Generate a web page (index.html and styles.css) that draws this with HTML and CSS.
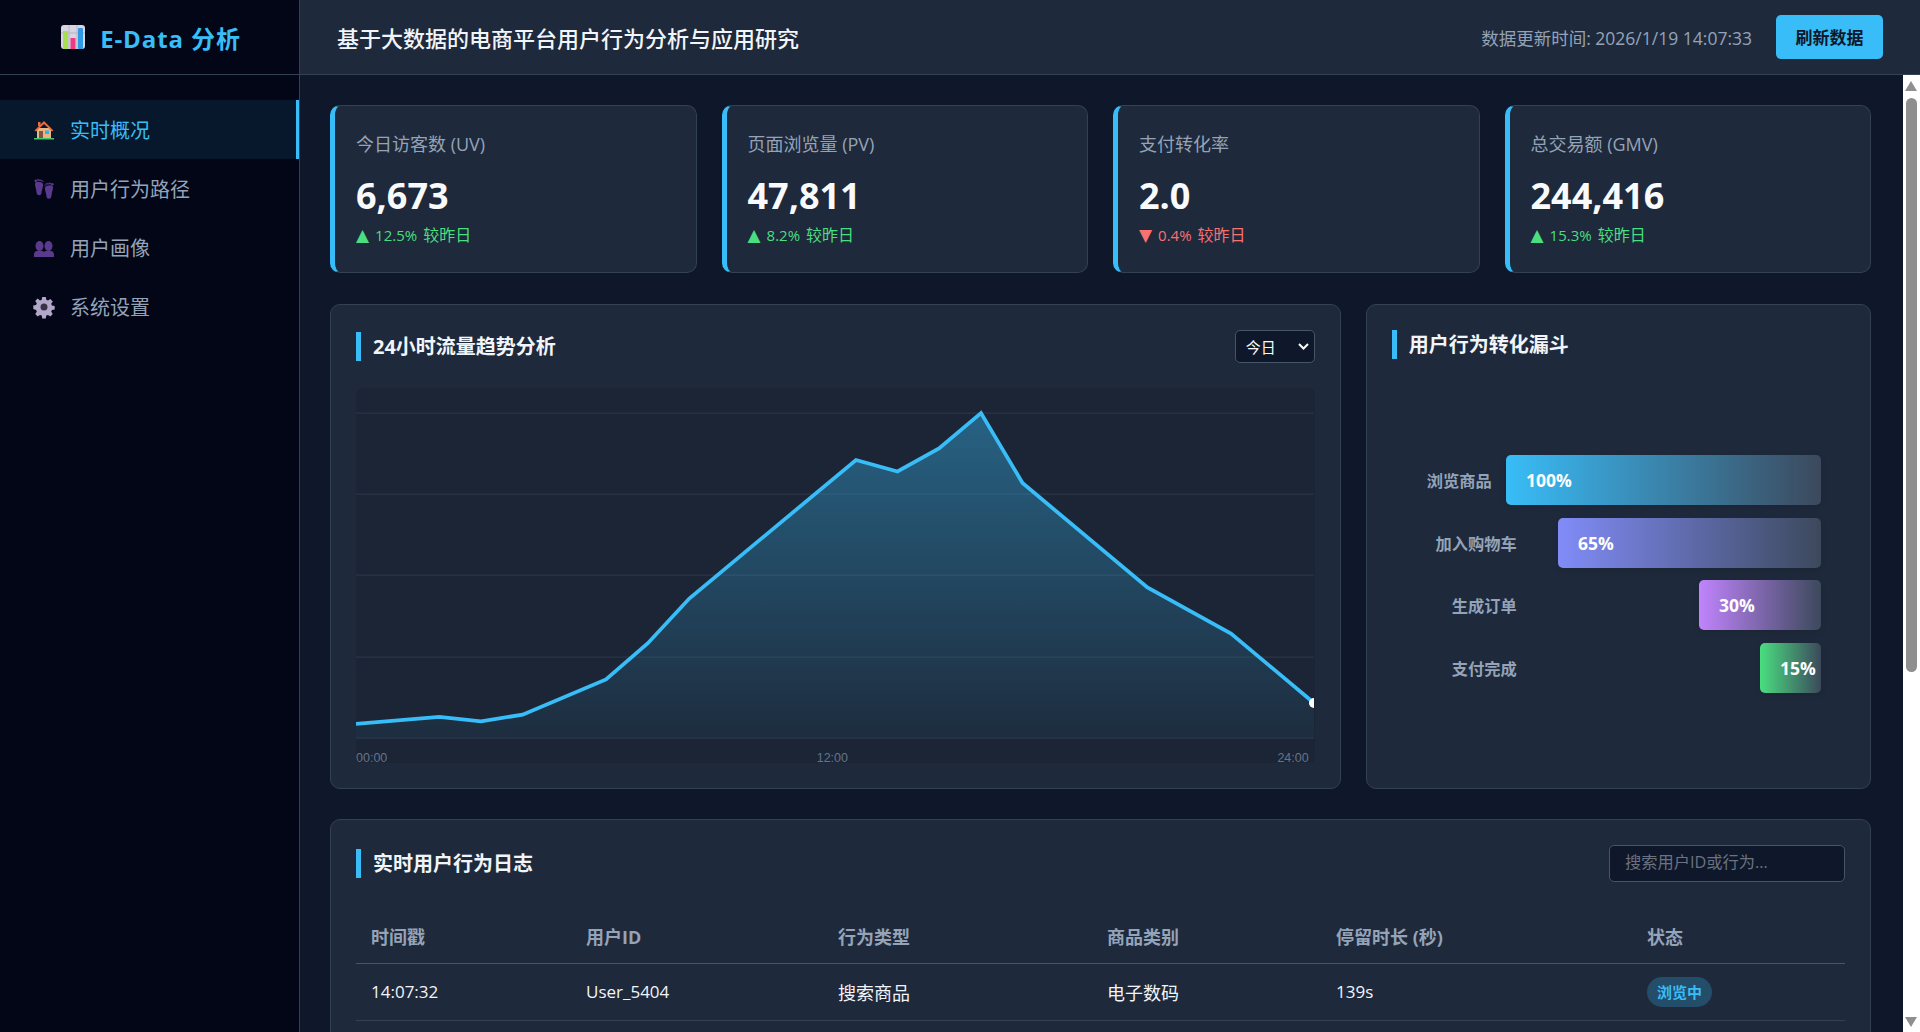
FILE: index.html
```html
<!DOCTYPE html>
<html lang="zh-CN">
<head>
  <meta charset="UTF-8" />
  <meta name="viewport" content="width=device-width, initial-scale=1.0"/>
  <title>E-Data 分析</title>
  <link rel="stylesheet" href="styles.css">
</head>
<body>

  <!-- 侧边栏 -->
  <aside class="sidebar">
    <div class="logo">
      <svg class="logo-icon" viewBox="0 0 24 24">
        <rect x="0" y="0" width="24" height="24" rx="3" fill="#d9d4e2"/>
        <path d="M0 8h24M8 0v24M16 0v24" stroke="#b9b4c6" stroke-width="1"/>
        <rect x="2" y="6" width="5" height="18" fill="#a6e04f"/>
        <rect x="9.500" y="13" width="5" height="11" fill="#ec3d82"/>
        <rect x="17" y="3" width="5" height="21" rx="1" fill="#2f9be8"/>
      </svg>
      <span>E-Data 分析</span>
    </div>
    <nav class="nav">
      <a class="nav-item active">
        <svg class="nav-icon" viewBox="0 0 20 20">
          <rect x="3" y="8" width="14" height="10" fill="#e9b680"/>
          <rect x="5" y="11" width="4" height="7" fill="#7b5546"/>
          <rect x="11" y="10.500" width="4" height="3.500" fill="#35b0ee"/>
          <path d="M0.500 10.500 10 1l9.500 9.500-1.500 1L10 4 2 11.500z" fill="#ee6a3c"/>
          <rect x="4" y="2" width="2.500" height="4" fill="#ee6a3c"/>
          <rect x="0" y="18" width="20" height="1.500" fill="#45c56b"/>
        </svg>
        <span>实时概况</span>
      </a>
      <a class="nav-item">
        <svg class="nav-icon" viewBox="0 0 20 20">
          <g fill="#5b3a8e">
            <g id="foot">
              <path d="M1 5C1 3 3 2.500 5 3c3 0 4.500 1 4 4-.5 3-1.500 5-1.500 7 0 2-2 2.500-3.500 2-1.500-.5-1.500-3-1.800-5C1.800 9 1 7 1 5z"/>
              <circle cx="1.700" cy="1.700" r="1.300"/>
              <circle cx="4" cy="1.100" r="1"/>
              <circle cx="6" cy="1.200" r=".9"/>
              <circle cx="7.800" cy="1.600" r=".8"/>
              <circle cx="9" cy="2.600" r=".7"/>
            </g>
            <use href="#foot" transform="translate(20 3.500) scale(-1 1)"/>
          </g>
        </svg>
        <span>用户行为路径</span>
      </a>
      <a class="nav-item">
        <svg class="nav-icon" viewBox="0 0 20 20">
          <g fill="#5b3a8e">
            <ellipse cx="5.500" cy="8" rx="4" ry="5"/>
            <ellipse cx="14.500" cy="8" rx="4" ry="5"/>
            <path d="M0 19v-2.500C0 14 2 12.500 5.500 12.500c1.800 0 3.500.5 4.500 1.500 1-1 2.700-1.500 4.500-1.500C18 12.500 20 14 20 16.500V19z"/>
          </g>
        </svg>
        <span>用户画像</span>
      </a>
      <a class="nav-item">
        <svg class="nav-icon" viewBox="0 0 20 20">
          <path fill="#b3a7c9" d="M8.200 0h3.600l.5 2.800 1.700.7 2.300-1.600 2.500 2.500-1.600 2.300.7 1.700 2.800.5v3.600l-2.800.5-.7 1.700 1.600 2.300-2.500 2.500-2.300-1.600-1.700.7-.5 2.800H8.200l-.5-2.800-1.700-.7-2.300 1.600-2.500-2.500 1.600-2.300-.7-1.700L-.7 12V8.400l2.800-.5.7-1.700-1.600-2.300 2.500-2.500L6 3.500l1.700-.7z"/>
          <circle cx="10" cy="10" r="3.500" fill="#3a3348"/>
        </svg>
        <span>系统设置</span>
      </a>
    </nav>
  </aside>

  <div class="main">
    <!-- 顶部栏 -->
    <header class="topbar">
      <h1 class="page-title">基于大数据的电商平台用户行为分析与应用研究</h1>
      <div class="topbar-right">
        <span class="update-time">数据更新时间: 2026/1/19 14:07:33</span>
        <button class="refresh-btn">刷新数据</button>
      </div>
    </header>

    <div class="main-body">
      <main class="content">

        <!-- 指标卡片 -->
        <section class="stats">
          <div class="stat-card">
            <div class="stat-label">今日访客数 (UV)</div>
            <div class="stat-value">6,673</div>
            <div class="stat-trend up"><span class="arrow">▲</span><span>12.5%</span><span class="compare">较昨日</span></div>
          </div>
          <div class="stat-card">
            <div class="stat-label">页面浏览量 (PV)</div>
            <div class="stat-value">47,811</div>
            <div class="stat-trend up"><span class="arrow">▲</span><span>8.2%</span><span class="compare">较昨日</span></div>
          </div>
          <div class="stat-card">
            <div class="stat-label">支付转化率</div>
            <div class="stat-value">2.0</div>
            <div class="stat-trend down"><span class="arrow">▼</span><span>0.4%</span><span class="compare">较昨日</span></div>
          </div>
          <div class="stat-card">
            <div class="stat-label">总交易额 (GMV)</div>
            <div class="stat-value">244,416</div>
            <div class="stat-trend up"><span class="arrow">▲</span><span>15.3%</span><span class="compare">较昨日</span></div>
          </div>
        </section>

        <section class="charts">
          <!-- 流量趋势 -->
          <div class="card">
            <div class="card-head">
              <h3 class="card-title">24小时流量趋势分析</h3>
              <select class="range-select">
                <option>今日</option>
                <option>昨日</option>
              </select>
            </div>
            <div class="trend-chart">
              <svg class="trend-svg" viewBox="0 0 958 351">
                <defs>
                  <linearGradient id="trendFill" x1="0" y1="0" x2="0" y2="1">
                    <stop offset="0" stop-color="#38bdf8" stop-opacity="0.4"/>
                    <stop offset="1" stop-color="#38bdf8" stop-opacity="0.05"/>
                  </linearGradient>
                </defs>
                <path class="grid-line" d="M0 25H958M0 106H958M0 187H958M0 269H958M0 350H958"/>
                <path fill="url(#trendFill)" d="M0 336L83.300 329 125 333.300 166.600 326.700 250 291.500 291.600 255.500 333.300 210.500 500 72 541.500 83.500 583 60.500 625 25 666.500 95 791.400 199.500 875 245.500 958 315V350H0Z"/>
                <path class="trend-line" d="M0 336L83.300 329 125 333.300 166.600 326.700 250 291.500 291.600 255.500 333.300 210.500 500 72 541.500 83.500 583 60.500 625 25 666.500 95 791.400 199.500 875 245.500 958 315"/>
                <circle cx="958" cy="315" r="5" fill="#fff"/>
              </svg>
              <div class="trend-axis">
                <span>00:00</span>
                <span>12:00</span>
                <span>24:00</span>
              </div>
            </div>
          </div>

          <!-- 转化漏斗 -->
          <div class="card">
            <div class="card-head">
              <h3 class="card-title">用户行为转化漏斗</h3>
            </div>
            <div class="funnel">
              <div class="funnel-row">
                <span class="funnel-label first">浏览商品</span>
                <div class="funnel-bar blue" style="width:315px">100%</div>
              </div>
              <div class="funnel-row">
                <span class="funnel-label">加入购物车</span>
                <div class="funnel-bar indigo" style="width:263px">65%</div>
              </div>
              <div class="funnel-row">
                <span class="funnel-label">生成订单</span>
                <div class="funnel-bar purple" style="width:122px">30%</div>
              </div>
              <div class="funnel-row">
                <span class="funnel-label">支付完成</span>
                <div class="funnel-bar green" style="width:61px">15%</div>
              </div>
            </div>
          </div>
        </section>

        <!-- 行为日志 -->
        <section class="card log-card">
          <div class="card-head">
            <h3 class="card-title">实时用户行为日志</h3>
            <input class="search-input" type="text" placeholder="搜索用户ID或行为..." />
          </div>
          <table class="log-table">
            <colgroup>
              <col class="col-time"><col class="col-user"><col class="col-action"><col class="col-cat"><col class="col-dur"><col class="col-status">
            </colgroup>
            <thead>
              <tr>
                <th>时间戳</th>
                <th>用户ID</th>
                <th>行为类型</th>
                <th>商品类别</th>
                <th>停留时长 (秒)</th>
                <th>状态</th>
              </tr>
            </thead>
            <tbody>
              <tr>
                <td class="latin">14:07:32</td>
                <td class="latin">User_5404</td>
                <td>搜索商品</td>
                <td>电子数码</td>
                <td class="latin">139s</td>
                <td><span class="badge">浏览中</span></td>
              </tr>
            </tbody>
          </table>
        </section>

      </main>

      <!-- 滚动条 -->
      <div class="scrollbar">
        <span class="scroll-up"></span>
        <span class="scroll-thumb"></span>
        <span class="scroll-down"></span>
      </div>
    </div>
  </div>

</body>
</html>
```

FILE: styles.css
```css
* {
  box-sizing: border-box;
}

body {
  margin: 0;
  height: 100vh;
  display: flex;
  overflow: hidden;
  background-color: #0f172a;
  color: #f1f5f9;
  font-family: "Open Sans", "Noto Sans CJK SC", sans-serif;
}

/* 侧边栏 */
.sidebar {
  width: 300px;
  flex-shrink: 0;
  background-color: #020617;
  border-right: 1px solid #334155;
}

.logo {
  height: 75px;
  display: flex;
  align-items: center;
  justify-content: center;
  gap: 15px;
  padding-left: 3px;
  border-bottom: 1px solid #334155;
  color: #38bdf8;
  font-size: 24px;
  font-weight: 700;
  letter-spacing: 0.900px;
}

.logo-icon {
  width: 24px;
  height: 24px;
}

.nav {
  padding-top: 25px;
}

.nav-item {
  height: 59px;
  display: flex;
  align-items: center;
  gap: 16px;
  padding-left: 34px;
  color: #94a3b8;
  font-size: 20px;
}

.nav-item.active {
  background-color: #07182c;
  border-right: 3px solid #38bdf8;
  color: #38bdf8;
}

.nav-icon {
  width: 20px;
  height: 20px;
  overflow: visible;
}

/* 顶部栏 */
.main {
  flex: 1;
  min-width: 0;
  display: flex;
  flex-direction: column;
}

.topbar {
  height: 75px;
  flex-shrink: 0;
  display: flex;
  align-items: center;
  justify-content: space-between;
  padding: 0 37px;
  background-color: #1e293b;
  border-bottom: 1px solid #334155;
}

.page-title {
  margin: 0;
  font-size: 22px;
  font-weight: 500;
  color: #f1f5f9;
}

.topbar-right {
  display: flex;
  align-items: center;
  gap: 24px;
}

.update-time {
  font-size: 17.500px;
  color: #94a3b8;
}

.refresh-btn {
  width: 107px;
  height: 44px;
  padding-bottom: 2px;
  border: none;
  border-radius: 5px;
  background-color: #38bdf8;
  color: #0f172a;
  font-family: inherit;
  font-size: 17px;
  font-weight: 700;
}

.main-body {
  flex: 1;
  min-height: 0;
  display: flex;
}

.content {
  flex: 1;
  min-width: 0;
  padding: 30px 32px 30px 30px;
  overflow: hidden;
}

/* 指标卡片 */
.stats {
  display: grid;
  grid-template-columns: repeat(4, 1fr);
  gap: 25px;
  margin-bottom: 31px;
}

.stat-card {
  height: 168px;
  padding: 26px 20px 0 21px;
  background-color: #1e293b;
  border: 1px solid #334155;
  border-left: 5px solid #38bdf8;
  border-radius: 10px;
}

.stat-label {
  font-size: 18px;
  line-height: 24px;
  color: #94a3b8;
}

.stat-value {
  margin-top: 17px;
  font-size: 36px;
  line-height: 46px;
  font-weight: 700;
  color: #f8fafc;
}

.stat-trend {
  margin-top: 4px;
  display: flex;
  align-items: center;
  gap: 6px;
  font-size: 15px;
  line-height: 24px;
}

.stat-trend .arrow {
  font-family: "DejaVu Sans", sans-serif;
  font-size: 17px;
}

.stat-trend .compare {
  font-size: 16px;
}

.stat-trend.up {
  color: #4ade80;
}

.stat-trend.down {
  color: #f87171;
}

/* 卡片 */
.card {
  padding: 25px;
  background-color: #1e293b;
  border: 1px solid #334155;
  border-radius: 10px;
}

.card-head {
  display: flex;
  align-items: center;
  justify-content: space-between;
}

.card-title {
  margin: 0;
  padding: 1px 0 0 12px;
  border-left: 5px solid #38bdf8;
  font-size: 20px;
  line-height: 28px;
  font-weight: 700;
  color: #f1f5f9;
}

.charts {
  display: grid;
  grid-template-columns: 2fr 1fr;
  gap: 25px;
  height: 484px;
  margin-bottom: 31px;
}

.range-select {
  width: 80px;
  height: 33px;
  padding-left: 10px;
  appearance: none;
  background: #0f172a url("data:image/svg+xml,%3Csvg xmlns='http://www.w3.org/2000/svg' width='11' height='7'%3E%3Cpath d='M1 1l4.500 4.500L10 1' fill='none' stroke='%23f8fafc' stroke-width='2'/%3E%3C/svg%3E") no-repeat right 5px center;
  color: #f8fafc;
  border: 1px solid #475569;
  border-radius: 5px;
  font-family: inherit;
  font-size: 15px;
}

/* 趋势图 */
.trend-chart {
  margin-top: 25px;
  height: 375px;
  background-color: #1c2535;
  border-radius: 6px;
  overflow: hidden;
}

.trend-svg {
  display: block;
  width: 958px;
  height: 351px;
}

.grid-line {
  stroke: #283548;
  stroke-width: 1.250;
  fill: none;
}

.trend-line {
  stroke: #38bdf8;
  stroke-width: 3.750;
  stroke-linejoin: miter;
  fill: none;
}

.trend-axis {
  display: flex;
  justify-content: space-between;
  padding: 12px 6px 0 0;
  font-family: "Liberation Sans", sans-serif;
  font-size: 12.500px;
  line-height: 14px;
  color: #64748b;
}

/* 漏斗 */
.funnel {
  margin-top: 96px;
  padding-right: 24px;
  display: flex;
  flex-direction: column;
  gap: 12.500px;
}

.funnel-row {
  display: flex;
  align-items: center;
  justify-content: space-between;
}

.funnel-label {
  width: 125px;
  text-align: right;
  font-size: 16.250px;
  font-weight: 700;
  color: #94a3b8;
}

.funnel-label.first {
  width: 100px;
}

.funnel-bar {
  height: 50px;
  display: flex;
  align-items: center;
  padding-left: 20px;
  border-radius: 5px;
  color: #fff;
  font-size: 17.500px;
  font-weight: 700;
  white-space: nowrap;
  box-shadow: 0 2px 6px rgba(0,0,0,0.1);
}

.funnel-bar.blue {
  background: linear-gradient(90deg, #38bdf8, #3c495c);
}

.funnel-bar.indigo {
  background: linear-gradient(90deg, #818cf8, #3c495c);
}

.funnel-bar.purple {
  background: linear-gradient(90deg, #c084fc, #3c495c);
}

.funnel-bar.green {
  background: linear-gradient(90deg, #4ade80, #3c495c);
}

/* 日志表 */
.log-card {
  min-height: 420px;
}

.search-input {
  width: 236px;
  height: 37px;
  padding: 0 15px 3px;
  background-color: #0f172a;
  border: 1px solid #475569;
  border-radius: 5px;
  font-family: inherit;
  font-size: 16.250px;
  color: #f1f5f9;
}

.search-input::placeholder {
  color: #6b7280;
}

.log-table {
  width: 100%;
  margin-top: 25px;
  border-collapse: collapse;
  table-layout: fixed;
  font-size: 18px;
}

.col-time { width: 215px; }
.col-user { width: 252px; }
.col-action { width: 269px; }
.col-cat { width: 229px; }
.col-dur { width: 311px; }

.log-table th {
  height: 56px;
  padding: 2px 15px 0;
  text-align: left;
  font-weight: 700;
  color: #94a3b8;
  border-bottom: 1px solid #475569;
}

.log-table td {
  height: 57px;
  padding: 0 15px;
  color: #f1f5f9;
  border-bottom: 1px solid #334155;
}

.log-table td.latin {
  font-size: 17px;
}

.badge {
  display: inline-block;
  padding: 0 10px;
  line-height: 30px;
  border-radius: 15px;
  background-color: rgba(56,189,248,0.25);
  color: #38bdf8;
  font-size: 15px;
  font-weight: 700;
}

/* 滚动条 */
.scrollbar {
  width: 17px;
  flex-shrink: 0;
  position: relative;
  background-color: #fff;
}

.scroll-up,
.scroll-down {
  position: absolute;
  left: 2px;
  width: 0;
  height: 0;
  border-left: 6.500px solid transparent;
  border-right: 6.500px solid transparent;
}

.scroll-up {
  top: 6px;
  border-bottom: 10px solid #8f8f8f;
}

.scroll-down {
  bottom: 5px;
  border-top: 10px solid #8f8f8f;
}

.scroll-thumb {
  position: absolute;
  top: 23px;
  left: 3px;
  width: 11px;
  height: 574px;
  border-radius: 6px;
  background-color: #8f8f8f;
}
```
